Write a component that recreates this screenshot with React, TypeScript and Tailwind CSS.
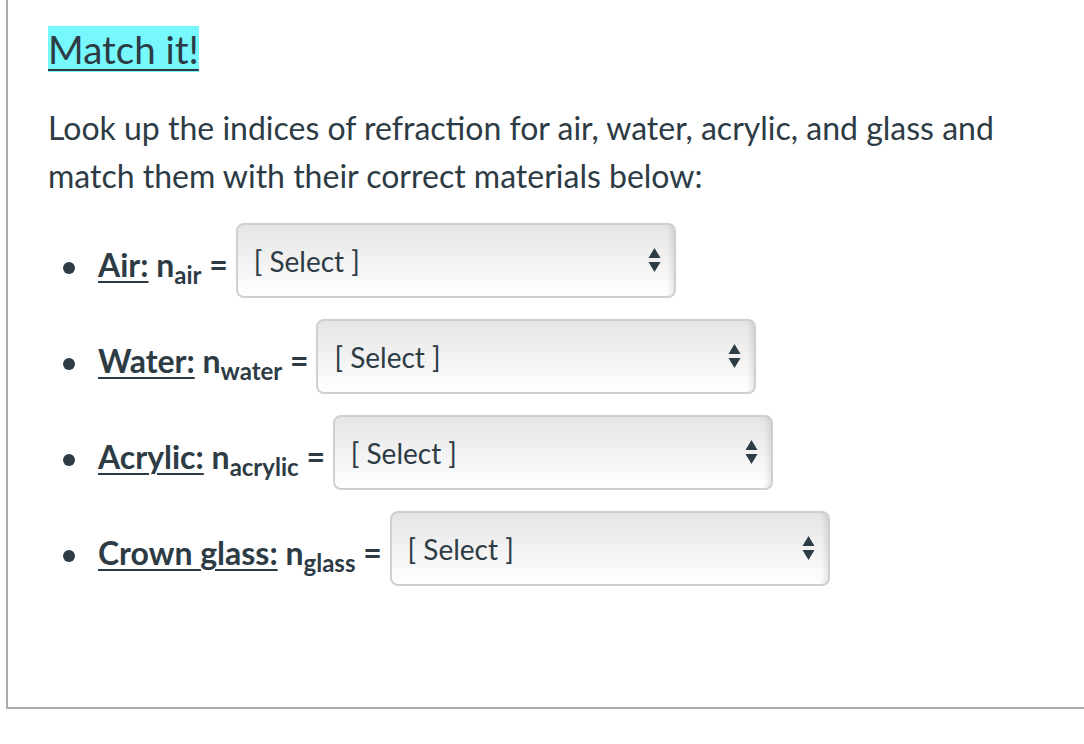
import React from "react";

function Arrows() {
  return (
    <svg width="13" height="26" viewBox="0 0 13 26" className="absolute right-[13px] top-[22px]">
      <polygon points="6.5,1 12.5,11 0.5,11" fill="#2d3b45" />
      <polygon points="0.5,15 12.5,15 6.5,25" fill="#2d3b45" />
    </svg>
  );
}

function SelectBox() {
  return (
    <span className="relative inline-block align-[5px] w-[440px] h-[75px] rounded-[8px] border-2 border-[#cfcfcf] bg-gradient-to-b from-[#e5e5e5] to-[#ffffff] pl-[16px] pt-[19px] text-[28px] font-normal leading-[34px] text-[#2d3b45] shadow-[inset_-7px_0_6px_-5px_rgba(0,0,0,0.12)]">
      [ Select ]
      <Arrows />
    </span>
  );
}

function Item({ label, sub }: { label: string; sub: string }) {
  return (
    <li className="mb-[21px] font-bold text-[32px] leading-[34px] text-[#2d3b45]">
      <span className="inline-block w-[12px] h-[12px] rounded-full bg-[#2d3b45] ml-[15px] mr-[23px] align-[3px]" />
      <span className="underline decoration-2 underline-offset-[4px]">{label}</span>{" "}
      <span>n</span>
      <span className="relative top-[7px] text-[24px] leading-none">{sub}</span>{" "}
      <span>=</span>{" "}
      <SelectBox />
    </li>
  );
}

export default function App() {
  return (
    <div className="w-[1084px] h-[744px] bg-white overflow-hidden" style={{ fontFamily: "Lato, 'Noto Sans', sans-serif" }}>
      <div className="ml-[6px] w-[1200px] h-[709px] border-l-2 border-b-2 border-[#ababab] pl-[40px] pt-[27px] text-[#2d3b45]">
        <h2 className="text-[38.5px] leading-[45px] font-normal">
          <span className="bg-[#76f8fd] underline decoration-2 underline-offset-[5px]">Match it!</span>
        </h2>
        <p className="mt-[32px] text-[32px] leading-[48px] w-[980px]">
          Look up the indices of refraction for air, water, acrylic, and glass and match them with their correct materials below:
        </p>
        <ul className="mt-[23px] list-none">
          <Item label="Air:" sub="air" />
          <Item label="Water:" sub="water" />
          <Item label="Acrylic:" sub="acrylic" />
          <Item label="Crown glass:" sub="glass" />
        </ul>
      </div>
    </div>
  );
}
